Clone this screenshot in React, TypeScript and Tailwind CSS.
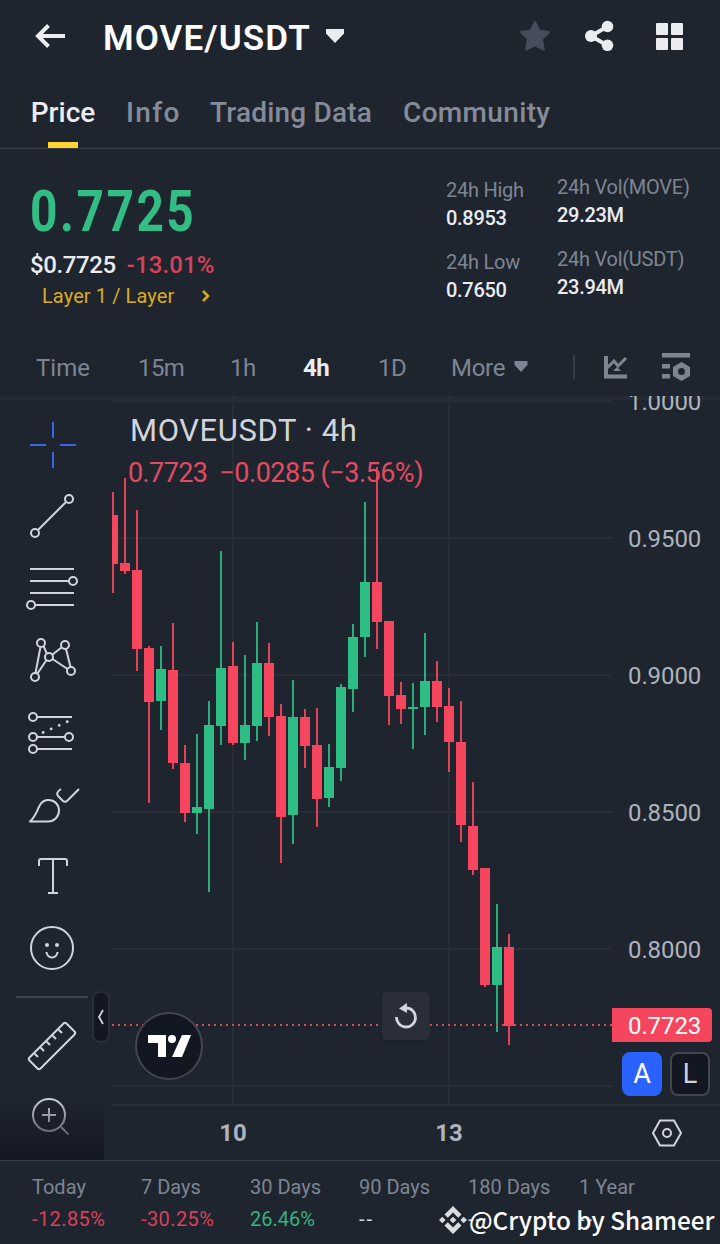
import type { ReactNode } from "react"

type Candle = [number, number, number, number, boolean]

// high, body top, body bottom, low, rising
const candles: Candle[] = [
    [492, 515, 564, 593, false],
    [478, 563, 571, 574, false],
    [510, 570, 649, 671, false],
    [646, 648, 702, 803, false],
    [646, 669, 701, 730, true],
    [623, 670, 763, 769, false],
    [745, 763, 813, 822, false],
    [734, 807, 813, 834, true],
    [701, 725, 809, 892, true],
    [551, 668, 726, 745, true],
    [642, 666, 743, 745, false],
    [655, 725, 743, 760, true],
    [622, 663, 726, 741, true],
    [643, 663, 717, 736, false],
    [704, 716, 817, 863, false],
    [680, 717, 815, 844, true],
    [709, 717, 746, 768, false],
    [708, 745, 799, 827, false],
    [744, 767, 798, 807, true],
    [684, 687, 768, 781, true],
    [624, 637, 689, 712, true],
    [502, 582, 637, 657, true],
    [467, 582, 622, 649, false],
    [621, 621, 696, 725, false],
    [682, 695, 709, 724, false],
    [683, 707, 709, 749, true],
    [633, 681, 707, 735, true],
    [661, 681, 707, 722, false],
    [688, 706, 742, 772, false],
    [701, 742, 825, 842, false],
    [782, 826, 870, 875, false],
    [868, 868, 985, 987, false],
    [904, 947, 985, 1032, true],
    [934, 947, 1026, 1045, false],
]

const prices = ["1.0000", "0.9500", "0.9000", "0.8500", "0.8000"]

const periods = [
    { label: "Today", value: "-12.85%", color: "text-[#d9415a] tracking-[0.4px]" },
    { label: "7 Days", value: "-30.25%", color: "text-[#d9415a] tracking-[0.4px]" },
    { label: "30 Days", value: "26.46%", color: "text-[#35b480]" },
    { label: "90 Days", value: "--", color: "text-[#d5dae2] tracking-[2px]" },
    { label: "180 Days", value: "--", color: "text-[#d5dae2] tracking-[2px]" },
    { label: "1 Year", value: "--", color: "text-[#d5dae2] tracking-[2px]" },
]

function Header() {
    return (
        <header className="flex h-[76px] items-center pl-[35px] pr-[37px] pb-1">
            <svg width="30" height="24" viewBox="0 0 30 24" fill="none" stroke="#eaecef" strokeWidth="4">
                <path d="M30 12H3M13.500 1.500 3 12l10.500 10.500" />
            </svg>
            <h1 className="ml-[38px] mt-[5px] text-[35px] leading-none font-semibold tracking-[1.1px] text-white">MOVE/USDT</h1>
            <svg className="ml-[14px]" width="20" height="16" viewBox="0 0 20 16" fill="#eaecef">
                <path d="M1 1h18v4.500L10 15 1 5.500z" />
            </svg>
            <div className="ml-auto flex items-center">
                <svg width="32" height="32" viewBox="0 0 32 32" fill="#464d5b" stroke="#464d5b" strokeWidth="2" strokeLinejoin="round">
                    <path d="m16 2 4.200 8.800 9.800 1.300-7.100 6.900 1.900 10.500L16 25.300 7.200 29.500l1.900-10.500L2 12.100l9.800-1.300z" />
                </svg>
                <svg className="ml-[33px]" width="32" height="32" viewBox="0 0 32 32" fill="#eaecef">
                    <path d="M23.500 6.500 7 16l16.500 9.500" fill="none" stroke="#eaecef" strokeWidth="4" />
                    <circle cx="7" cy="16" r="6" />
                    <circle cx="23.500" cy="6.500" r="5.800" />
                    <circle cx="23.500" cy="25.300" r="5.800" />
                </svg>
                <div className="ml-[40px] grid grid-cols-2 gap-[3px]">
                    <i className="size-3 rounded-[1px] bg-[#eaecef]" />
                    <i className="size-3 rounded-[1px] bg-[#eaecef]" />
                    <i className="size-3 rounded-[1px] bg-[#eaecef]" />
                    <i className="size-3 rounded-[1px] bg-[#eaecef]" />
                </div>
            </div>
        </header>
    )
}

function Tabs() {
    return (
        <nav className="flex h-[73px] border-b border-[#363d47] pl-[30px] text-[28px] font-medium leading-[74px] text-[#848b99]">
            <div className="flex w-[66px] flex-col items-center text-[#eaecef]">
                <span className="h-[66px] tracking-[0px]">Price</span>
                <i className="h-[6px] w-[30px] bg-[#fcd535]" />
            </div>
            <span className="ml-[30px] w-[84px] tracking-[1.4px]">Info</span>
            <span className="w-[193px] whitespace-nowrap tracking-[0.2px]">Trading Data</span>
            <span className="tracking-[0.35px]">Community</span>
        </nav>
    )
}

function Stat({ label, value }: { label: string; value: string }) {
    return (
        <div className="h-[72px] whitespace-nowrap">
            <p className="text-[20px] leading-[28px] tracking-[-0.25px] text-[#7d8592]">{label}</p>
            <p className="text-[20px] leading-[28px] font-medium tracking-[-0.3px] text-[#eaecef]">{value}</p>
        </div>
    )
}

function Summary() {
    return (
        <section className="flex h-[191px]">
            <div className="w-[446px] pl-[30px] pt-[32px]">
                <p className="w-fit origin-left scale-x-[0.84] text-[57px] leading-[62px] font-bold tracking-[3px] text-[#32bd84]">0.7725</p>
                <p className="mt-[6px] flex gap-[11px] text-[24px] leading-[32px] font-medium">
                    <span className="tracking-[-0.4px] text-[#eaecef]">$0.7725</span>
                    <span className="tracking-[0.1px] text-[#d9415a]">-13.01%</span>
                </p>
                <p className="flex items-center pl-3 text-[20px] leading-[30px] text-[#d9ac22]">
                    <span className="w-[160px] tracking-[0.1px]">Layer 1 / Layer</span>
                    <svg width="8" height="12" viewBox="0 0 8 12" fill="none" stroke="#d9ac22" strokeWidth="2.500">
                        <path d="m1 1 5 5-5 5" />
                    </svg>
                </p>
            </div>
            <div className="w-[111px] pt-[27px]">
                <Stat label="24h High" value="0.8953" />
                <Stat label="24h Low" value="0.7650" />
            </div>
            <div className="pt-[24px]">
                <Stat label="24h Vol(MOVE)" value="29.23M" />
                <Stat label="24h Vol(USDT)" value="23.94M" />
            </div>
        </section>
    )
}

function Intervals() {
    return (
        <div className="flex h-14 items-center pl-9 text-[24px] text-[#7d8592]">
            <span className="w-[102px]">Time</span>
            <span className="w-[92px] tracking-[-0.6px]">15m</span>
            <span className="w-[73px] tracking-[-0.6px]">1h</span>
            <span className="w-[75px] font-bold tracking-[-0.6px] text-[#eaecef]">4h</span>
            <span className="w-[73px] tracking-[-0.6px]">1D</span>
            <span className="w-[63px] tracking-[-0.3px]">More</span>
            <svg className="-mt-[2px]" width="14" height="12" viewBox="0 0 14 12" fill="#7d8592">
                <path d="M.500 0h13v4L7 11 .500 4z" />
            </svg>
            <i className="-mt-[2px] ml-[45px] h-[24px] w-[2px] bg-[#343b46]" />
            <svg className="-mt-[3px] ml-[28px]" width="26" height="26" viewBox="0 0 26 26" fill="none" stroke="#7d8592">
                <path d="M3 2v20.500h21" strokeWidth="4" />
                <path d="m4 14 7-7 4 5L23 4" strokeWidth="3" />
                <path d="m14 13 4 4h-8z" fill="#7d8592" stroke="none" />
            </svg>
            <svg className="-mt-[2px] ml-[33px]" width="30" height="30" viewBox="0 0 30 30" fill="#7d8592">
                <path d="M0 1h28v4.500H0zM0 12h8v4.500H0zM0 22h8v4.500H0z" />
                <path fillRule="evenodd" d="m19.500 10 8.500 5v9l-8.500 5-8.500-5v-9zm0 6a3.500 3.500 0 1 0 0 7 3.500 3.500 0 0 0 0-7" />
            </svg>
        </div>
    )
}

function Tool({ children, color = "#d1d4dc" }: { children: ReactNode; color?: string }) {
    return (
        <svg className="shrink-0" width="72" height="72" viewBox="0 0 72 72" fill="none" stroke={color} strokeWidth="2">
            {children}
        </svg>
    )
}

function Toolbar() {
    return (
        <aside className="relative flex h-full w-[112px] shrink-0 flex-col pl-4 pt-[13px]">
            <Tool color="#3c66e6">
                <path d="M37 13v16M37 43v16M14 36h16M44 36h16" />
            </Tool>
            <Tool>
                <path d="m22 49 28-28" />
                <circle cx="19" cy="52" r="4" />
                <circle cx="53" cy="18" r="4" />
            </Tool>
            <Tool>
                <path d="M14 16h44M14 28h39M14 40h44M19 52h39" />
                <circle cx="57" cy="28" r="4" />
                <circle cx="15" cy="52" r="4" />
            </Tool>
            <Tool>
                <path d="m24.500 22-5 26M27.500 21l3.500 8M36.500 29.500l9-7M36.500 34l15 10M50 24l4.500 18M30.500 35l-9 13.500" />
                <circle cx="25" cy="18" r="4" />
                <circle cx="49" cy="20" r="4" />
                <circle cx="33" cy="32" r="4" />
                <circle cx="55" cy="46" r="4" />
                <circle cx="19" cy="52" r="4" />
            </Tool>
            <Tool>
                <path d="M21 20h35M21 40h28M21 52h35" />
                <path d="M26 36l28-12.500" strokeWidth="2.500" strokeDasharray="2.500 6.300" />
                <circle cx="17" cy="20" r="4" />
                <circle cx="17" cy="40" r="4" />
                <circle cx="53" cy="40" r="4" />
                <circle cx="17" cy="52" r="4" />
            </Tool>
            <Tool>
                <path d="M14 52.500C20 47 21 41 24 36c2-3.500 5-5 8.500-5C38.500 31 43 35.500 43 41.500S38.500 52.500 32 52.500z" strokeLinejoin="round" />
                <path d="M45 20c-4 2.500-5 5-2.500 7.500l4 4c1.500 1.500 3.500 1.500 5 0L63 20" />
            </Tool>
            <Tool>
                <path d="M23 25v-5q0-2 2-2h24q2 0 2 2v5M37 18v34M32 52h10" />
            </Tool>
            <Tool>
                <circle cx="36" cy="35" r="21" />
                <circle cx="31" cy="32" r="2" fill="#d1d4dc" stroke="none" />
                <circle cx="41" cy="32" r="2" fill="#d1d4dc" stroke="none" />
                <path d="M30.500 39a5.500 5.500 0 0 0 11 0" />
            </Tool>
            <i className="mt-[11px] mb-[11px] h-[2px] w-[72px] shrink-0 bg-[#3d434d]" />
            <Tool>
                <path d="M47.500 14.500q1.500-1.500 3 0l8 8q1.500 1.500 0 3l-34 34q-1.500 1.500-3 0l-8-8q-1.500-1.500 0-3zM18 44l4 4M24 38l4 4M30 32l4 4M36 26l4 4M42 20l4 4" />
            </Tool>
            <Tool>
                <circle cx="33" cy="34" r="16" />
                <path d="M26 34h14M33 27v14M45 46l7.500 7.500" />
            </Tool>
            <div className="absolute bottom-0 left-0 h-[64px] w-[104px] bg-gradient-to-b from-transparent to-[#131722]" />
            <div className="absolute left-[92px] top-[595px] flex h-[52px] w-[18px] items-center justify-center rounded-lg border-2 border-[#2a2e39] bg-[#131722]">
                <svg width="8" height="16" viewBox="0 0 8 16" fill="none" stroke="#d1d4dc" strokeWidth="1.800">
                    <path d="M6 1 2 8l4 7" />
                </svg>
            </div>
        </aside>
    )
}

function Candles() {
    return (
        <svg width="500" height="708" viewBox="112 396 500 708" shapeRendering="crispEdges">
            {[401, 538, 675, 812, 949, 1086].map((y) => (
                <rect key={y} x="112" y={y - 1} width="500" height="2" fill="#282e37" />
            ))}
            {[233, 449].map((x) => (
                <rect key={x} x={x - 1} y="396" width="2" height="708" fill="#282e37" />
            ))}
            {candles.map(([high, top, bottom, low, up], i) => (
                <g key={i} fill={up ? "#2ebd85" : "#f6465d"}>
                    <rect x={112 + i * 12} y={high} width="2" height={low - high} opacity="0.9" />
                    <rect x={108 + i * 12} y={top} width="10" height={bottom - top} />
                </g>
            ))}
            <path d="M112 1025H612" stroke="#d9485e" strokeWidth="2" strokeDasharray="2 4" />
        </svg>
    )
}

function Plot() {
    return (
        <div className="relative h-[708px] w-[500px] shrink-0">
            <Candles />
            <div className="absolute left-[18px] top-[15px] whitespace-nowrap">
                <p className="text-[31px] leading-[40px] tracking-[0.6px] text-[#d1d4dc]">MOVEUSDT · 4h</p>
                <p className="-ml-[2px] mt-[3px] flex gap-[12px] text-[27px] leading-[38px] text-[#e24b61]">
                    <span className="tracking-[-0.6px]">0.7723</span>
                    <span className="tracking-[-0.5px]">−0.0285 (−3.56%)</span>
                </p>
            </div>
            <div className="absolute left-[23px] top-[616px] flex size-[68px] items-center justify-center rounded-full border-2 border-[#434651] bg-[#131722]">
                <svg width="44" height="24" viewBox="0 0 44 24" fill="#fff">
                    <path d="M1 1h18v22h-8V9H1zM35 1h9l-9 22H25z" />
                    <circle cx="25" cy="5" r="4" />
                </svg>
            </div>
            <div className="absolute left-[270px] top-[596px] flex size-12 items-center justify-center rounded-md bg-[#2a2e39] shadow-md">
                <svg width="24" height="28" viewBox="0 0 24 28" fill="none" stroke="#d1d4dc" strokeWidth="2.800">
                    <path d="M2.500 15A9.500 9.500 0 1 0 12 6h-2" />
                    <path d="M5 6.500 13 1v10z" fill="#d1d4dc" stroke="none" />
                </svg>
            </div>
        </div>
    )
}

function PriceAxis() {
    return (
        <div className="relative h-[708px] flex-1 overflow-hidden text-[24px]">
            <div className="-mt-[62px] flex flex-col pl-4 leading-[137px] tracking-[-0.1px] text-[#aeb3bd]">
                {prices.map((price) => (
                    <span key={price} className="h-[137px]">{price}</span>
                ))}
            </div>
            <div className="absolute left-0 top-[612px] h-[34px] w-[100px] rounded-r bg-[#f6465d] pl-4 leading-[36px] tracking-[-0.1px] text-white">0.7723</div>
            <div className="absolute left-[10px] top-[656px] flex gap-2 text-center text-[27px] leading-[44px]">
                <span className="h-[44px] w-10 rounded-lg bg-[#2962ff] text-white">A</span>
                <span className="h-[44px] w-10 rounded-lg border-2 border-[#434651] bg-[#131722] leading-[40px] text-[#d1d4dc]">L</span>
            </div>
        </div>
    )
}

function Chart() {
    return (
        <section className="relative flex h-[764px]">
            <Toolbar />
            <div className="flex w-[608px] flex-col">
                <div className="flex h-[708px]">
                    <Plot />
                    <PriceAxis />
                </div>
                <div className="flex h-14 items-center border-t-2 border-[#2a3039] text-center text-[24px] font-bold text-[#aeb3bd]">
                    <span className="ml-[91px] w-[60px]">10</span>
                    <span className="ml-[156px] w-[60px]">13</span>
                    <svg className="ml-[172px]" width="32" height="28" viewBox="0 0 32 28" fill="none" stroke="#d1d4dc" strokeWidth="2">
                        <path d="M9 1.500h14L30 14l-7 12.500H9L2 14z" />
                        <circle cx="16" cy="14" r="4" />
                    </svg>
                </div>
            </div>
            <div className="absolute inset-x-0 top-0 h-1 bg-white/[0.03]" />
        </section>
    )
}

function Footer() {
    return (
        <footer className="relative h-[84px] border-t border-[#363d47] pl-8 pt-[11px]">
            <div className="flex whitespace-nowrap text-[20px]">
                {periods.map(({ label, value, color }) => (
                    <div key={label} className="w-[109px] shrink-0 last:w-auto last:pl-[2px]">
                        <p className="leading-[30px] text-[#7d8592]">{label}</p>
                        <p className={`leading-[34px] ${color}`}>{value}</p>
                    </div>
                ))}
            </div>
            <div className="absolute left-[439px] top-[41px] flex h-9 items-center whitespace-nowrap">
                <svg width="28" height="28" viewBox="0 0 28 28" fill="#dadcdf">
                    <path d="m14 0 8.500 8.500-3.300 3.300L14 6.600l-5.200 5.200-3.300-3.300zM14 28l8.500-8.500-3.300-3.300-5.200 5.200-5.200-5.200-3.300 3.300zM3.300 10.700 6.600 14l-3.300 3.300L0 14zM24.700 10.700 28 14l-3.300 3.300-3.300-3.300zM14 10.700l3.300 3.300-3.300 3.300-3.300-3.300z" />
                </svg>
                <span className="ml-[2px] font-['Noto_Sans_CJK_SC',sans-serif] text-[24.300px] font-medium text-white">@Crypto by Shameer</span>
            </div>
        </footer>
    )
}

export default function App() {
    return (
        <main className="h-[1244px] w-[720px] overflow-hidden bg-[#1f252f] font-[Roboto,sans-serif]">
            <Header />
            <Tabs />
            <Summary />
            <Intervals />
            <Chart />
            <Footer />
        </main>
    )
}
